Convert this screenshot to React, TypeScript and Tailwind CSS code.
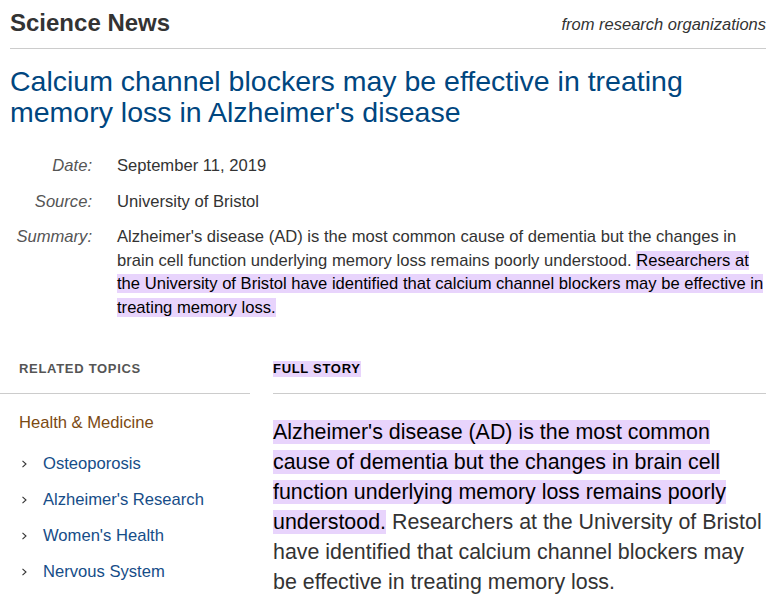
import React from 'react'

const topics = ['Osteoporosis', "Alzheimer's Research", "Women's Health", 'Nervous System']

function MetaRow({ label, children }: { label: string; children: React.ReactNode }) {
  return (
    <div className="flex">
      <div className="w-[82px] shrink-0 text-right italic text-[#555]">{label}</div>
      <div className="pl-[25px] flex-1">{children}</div>
    </div>
  )
}

export default function App() {
  return (
    <div className="w-[772px] h-[598px] overflow-hidden bg-white text-[#333] font-['Liberation_Sans',Arial,sans-serif]">
      <div className="pl-[10px] pr-[4px]">
        <div className="h-[49px] mr-[2px] flex items-start justify-between pt-[9px] border-b border-[#ccc]">
          <div className="text-[24px] font-bold leading-[28px] text-[#333]">Science News</div>
          <div className="text-[16.5px] italic leading-[28px] text-[#333] pt-[1px]">from research organizations</div>
        </div>
        <h1 className="mt-[17px] text-[28.5px] leading-[31px] text-[#00467f]">
          Calcium channel blockers may be effective in treating memory loss in Alzheimer's disease
        </h1>
        <div className="mt-[26px] flex flex-col gap-[12px] text-[16.6px] leading-[23.6px]">
          <MetaRow label="Date:">September 11, 2019</MetaRow>
          <MetaRow label="Source:">University of Bristol</MetaRow>
          <MetaRow label="Summary:">
            Alzheimer's disease (AD) is the most common cause of dementia but the changes in brain cell function
            underlying memory loss remains poorly understood.{' '}
            <span className="bg-[#e8d4fc] text-black">
              Researchers at the University of Bristol have identified that calcium channel blockers may be effective
              in treating memory loss.
            </span>
          </MetaRow>
        </div>
      </div>

      <div className="mt-[25px] flex">
        <div className="w-[250px] shrink-0">
          <div className="pl-[19px] h-[49px] flex items-center border-b border-[#ccc] text-[13px] font-bold tracking-[0.7px] text-[#555]">
            RELATED TOPICS
          </div>
          <div className="pl-[19px] mt-[18px] text-[16.6px] leading-[22px] text-[#7b4a12]">Health &amp; Medicine</div>
          <ul className="mt-[19px] flex flex-col gap-[14px] text-[16.6px] leading-[22px]">
            {topics.map((t) => (
              <li key={t} className="flex items-center">
                <span className="w-[43px] pl-[21px] flex items-center">
                  <svg width="7" height="10" viewBox="0 0 7 10">
                    <path d="M1.5 1.8 L5 5 L1.5 8.2" fill="none" stroke="#333" strokeWidth="1.1" />
                  </svg>
                </span>
                <span className="text-[#164d88]">{t}</span>
              </li>
            ))}
          </ul>
        </div>
        <div className="ml-[23px] w-[493px]">
          <div className="h-[49px] flex items-center border-b border-[#ccc]">
            <span className="bg-[#e8d4fc] text-black text-[13px] font-bold tracking-[0.7px] leading-[16px]">
              FULL STORY
            </span>
          </div>
          <p className="mt-[23px] text-[21.4px] leading-[30px] text-[#333]">
            <span className="bg-[#e8d4fc] text-black">
              Alzheimer's disease (AD) is the most common cause of dementia but the changes in brain cell function
              underlying memory loss remains poorly understood.
            </span>{' '}
            Researchers at the University of Bristol have identified that calcium channel blockers may be effective in
            treating memory loss.
          </p>
        </div>
      </div>
    </div>
  )
}
